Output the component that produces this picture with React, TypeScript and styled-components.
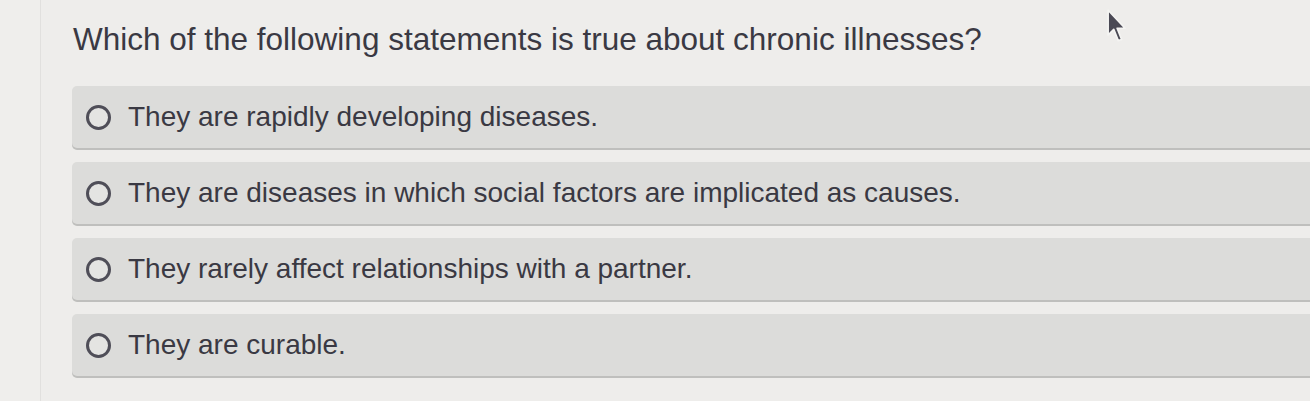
import React from "react";
import styled, { createGlobalStyle } from "styled-components";

const Global = createGlobalStyle`
  html, body { margin: 0; padding: 0; background: #eeedeb; }
  body { font-family: "Liberation Sans", Arial, sans-serif; overflow: hidden; }
`;

const Page = styled.div`
  display: flex;
  width: 1310px;
  height: 401px;
  position: relative;
  background: #eeedeb;
`;

const Gutter = styled.div`
  width: 40px;
  flex: none;
  border-right: 1px solid #e1e0de;
  background: #efeeec;
`;

const Content = styled.div`
  flex: 1;
  display: flex;
  flex-direction: column;
  padding: 20px 0 0 31px;
`;

const Question = styled.h1`
  margin: 0 0 28px 1px;
  font-size: 31.5px;
  font-weight: 400;
  color: #3a3943;
  line-height: 38px;
`;

const Options = styled.div`
  display: flex;
  flex-direction: column;
  gap: 14px;
`;

const Option = styled.label`
  display: flex;
  align-items: center;
  gap: 17px;
  height: 62px;
  padding-left: 14px;
  background: #dcdcda;
  border-radius: 5px 0 0 5px;
  box-shadow: 0 2px 0 #bfbfbd;
  cursor: pointer;
`;

const Radio = styled.span`
  width: 19px;
  height: 19px;
  flex: none;
  border: 3px solid #4f4e58;
  border-radius: 50%;
  background: #e4e4e2;
`;

const OptionText = styled.span`
  font-size: 28px;
  color: #3a3943;
`;

const Cursor = styled.svg`
  position: absolute;
  left: 1103px;
  top: 8px;
`;

const options = [
  "They are rapidly developing diseases.",
  "They are diseases in which social factors are implicated as causes.",
  "They rarely affect relationships with a partner.",
  "They are curable.",
];

export default function App() {
  return (
    <>
      <Global />
      <Page>
        <Gutter />
        <Content>
          <Question>Which of the following statements is true about chronic illnesses?</Question>
          <Options>
            {options.map((o) => (
              <Option key={o}>
                <Radio />
                <OptionText>{o}</OptionText>
              </Option>
            ))}
          </Options>
        </Content>
        <Cursor width="26" height="36" viewBox="0 0 22 32">
          <path d="M4 2 L4 24 L9 19 L13 29 L16 28 L12 18 L19 18 Z" fill="#4a4954" stroke="#f4f4f2" strokeWidth="1.5" strokeLinejoin="round" />
        </Cursor>
      </Page>
    </>
  );
}
